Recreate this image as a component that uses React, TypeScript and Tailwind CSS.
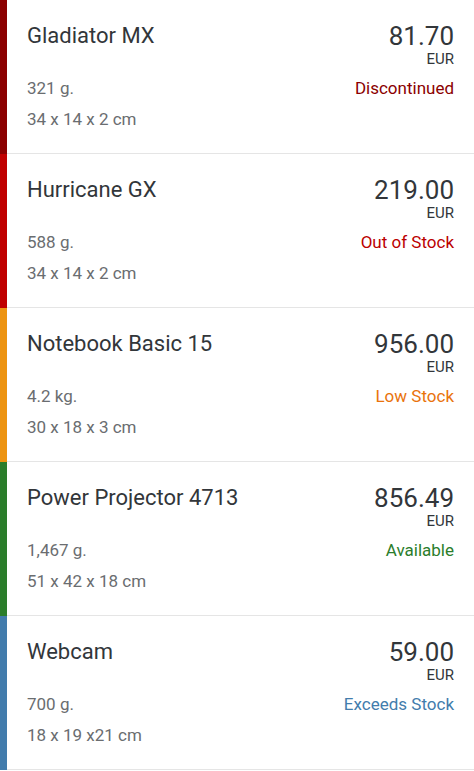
const products = [
  {
    name: "Gladiator MX",
    price: "81.70",
    weight: "321 g.",
    size: "34 x 14 x 2 cm",
    status: "Discontinued",
    bar: "bg-[#8b0000]",
    text: "text-[#8b0000]",
  },
  {
    name: "Hurricane GX",
    price: "219.00",
    weight: "588 g.",
    size: "34 x 14 x 2 cm",
    status: "Out of Stock",
    bar: "bg-[#c00000]",
    text: "text-[#bb0000]",
  },
  {
    name: "Notebook Basic 15",
    price: "956.00",
    weight: "4.2 kg.",
    size: "30 x 18 x 3 cm",
    status: "Low Stock",
    bar: "bg-[#ed9412]",
    text: "text-[#e9730c]",
  },
  {
    name: "Power Projector 4713",
    price: "856.49",
    weight: "1,467 g.",
    size: "51 x 42 x 18 cm",
    status: "Available",
    bar: "bg-[#2b7d2b]",
    text: "text-[#2b7d2b]",
  },
  {
    name: "Webcam",
    price: "59.00",
    weight: "700 g.",
    size: "18 x 19 x21 cm",
    status: "Exceeds Stock",
    bar: "bg-[#427cac]",
    text: "text-[#427cac]",
  },
];

export default function App() {
  return (
    <div className="w-[474px] bg-white font-['Roboto',sans-serif]">
      <ul>
        {products.map((p) => (
          <li key={p.name} className="flex">
            {/* status highlight */}
            <div className={`w-[7px] shrink-0 ${p.bar}`} />
            <div className="flex-1 border-b border-[#e5e5e5] pl-[20px] pr-[20px] pt-[21px] pb-[24px]">
              <div className="flex items-start justify-between">
                <div className="pt-[2px] text-[22px] leading-[26px] text-[#32363a]">{p.name}</div>
                <div className="flex flex-col items-end">
                  <div className="text-[26px] leading-[30px] text-[#32363a]">{p.price}</div>
                  <div className="text-[15px] leading-[16px] text-[#32363a]">EUR</div>
                </div>
              </div>
              <div className="mt-[11px] flex items-start justify-between text-[17px] leading-[20px]">
                <div className="text-[#6a6d70]">{p.weight}</div>
                <div className={p.text}>{p.status}</div>
              </div>
              <div className="mt-[11px] text-[17px] leading-[20px] text-[#6a6d70]">{p.size}</div>
            </div>
          </li>
        ))}
      </ul>
    </div>
  );
}
